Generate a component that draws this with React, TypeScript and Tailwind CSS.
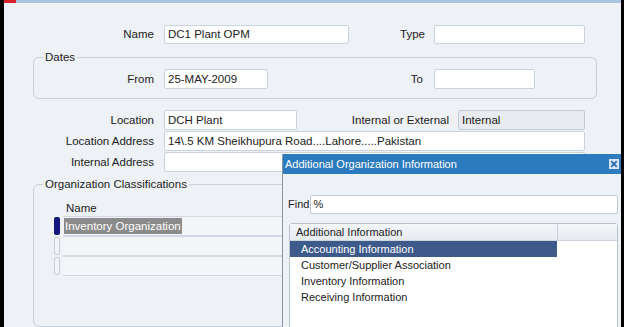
import React from 'react';

const font = "font-['Liberation_Sans',Arial,sans-serif]";

function Field({ w, value, gray }: { w: string; value?: string; gray?: boolean }) {
  return (
    <div
      className={`${w} h-full border rounded-[2px] flex items-center px-[3px] text-[11.5px] text-[#222] whitespace-nowrap overflow-hidden ${
        gray ? 'bg-[#e8ebef] border-[#c3cbd4]' : 'bg-white border-[#c9d2dd]'
      }`}
    >
      {value}
    </div>
  );
}

function Label({ w, children }: { w: string; children: React.ReactNode }) {
  return <div className={`${w} shrink-0 text-right text-[11.5px] text-[#222] whitespace-nowrap`}>{children}</div>;
}

function CloseIcon() {
  return (
    <svg width="10" height="10" viewBox="0 0 10 10">
      <rect x="0" y="0" width="10" height="10" fill="#d6e5f3" />
      <path d="M2.2 2.2 L7.8 7.8 M7.8 2.2 L2.2 7.8" stroke="#2a6cae" strokeWidth="1.8" />
    </svg>
  );
}

export default function App() {
  const items = ['Customer/Supplier Association', 'Inventory Information', 'Receiving Information'];

  return (
    <div className={`w-[624px] h-[327px] bg-black flex overflow-hidden relative ${font}`}>
      <div className="w-[4px] shrink-0 bg-black" />

      {/* main form */}
      <div className="w-[617px] shrink-0 flex flex-col bg-[#eef1f6]">
        <div className="h-[3px] shrink-0 flex">
          <div className="w-[12px] bg-[#d9202a]" />
          <div className="flex-1 bg-[#a9c3e1]" />
        </div>

        {/* Name / Type */}
        <div className="mt-[22px] h-[21px] flex items-center">
          <Label w="w-[150px]">Name</Label>
          <div className="ml-[10px] h-full flex items-center">
            <Field w="w-[185px]" value="DC1 Plant OPM" />
          </div>
          <Label w="w-[76px]">Type</Label>
          <div className="ml-[9px] h-full">
            <Field w="w-[151px]" />
          </div>
        </div>

        {/* Dates */}
        <fieldset className="mt-[7px] ml-[29px] w-[564px] border border-[#c8d0da] rounded-[6px] px-0 pt-[6px] pb-[9px]">
          <legend className="ml-[9px] px-[2px] text-[11.5px] leading-[12px] text-[#222]">Dates</legend>
          <div className="h-[20px] flex items-center">
            <Label w="w-[120px]">From</Label>
            <div className="ml-[10px] h-full">
              <Field w="w-[104px]" value="25-MAY-2009" />
            </div>
            <Label w="w-[155px]">To</Label>
            <div className="ml-[11px] h-full">
              <Field w="w-[101px]" />
            </div>
          </div>
        </fieldset>

        {/* Location block */}
        <div className="mt-[11px] flex flex-col gap-px">
          <div className="h-[20px] flex items-center">
            <Label w="w-[150px]">Location</Label>
            <div className="ml-[10px] h-full">
              <Field w="w-[133px]" value="DCH Plant" />
            </div>
            <Label w="w-[152px]">Internal or External</Label>
            <div className="ml-[9px] h-full">
              <Field w="w-[127px]" value="Internal" gray />
            </div>
          </div>
          <div className="h-[20px] flex items-center">
            <Label w="w-[150px]">Location Address</Label>
            <div className="ml-[10px] h-full">
              <Field w="w-[421px]" value="14\.5 KM Sheikhupura Road....Lahore.....Pakistan" />
            </div>
          </div>
          <div className="h-[20px] flex items-center">
            <Label w="w-[150px]">Internal Address</Label>
            <div className="ml-[10px] h-full">
              <Field w="w-[421px]" />
            </div>
          </div>
        </div>

        {/* Organization Classifications */}
        <fieldset className="mt-[6px] ml-[29px] w-[564px] h-[200px] border border-[#c8d0da] rounded-[6px] px-0 pt-[10px]">
          <legend className="ml-[9px] px-[2px] text-[11.5px] leading-[12px] text-[#222]">Organization Classifications</legend>
          <div className="ml-[20px] flex flex-col">
            <div className="h-[16px] pl-[12px] flex items-center text-[11.5px] text-[#222]">Name</div>
            {[0, 1, 2].map((i) => (
              <div key={i} className="h-[20px] flex items-stretch">
                <div className="w-[9px] shrink-0 py-[1px] pr-[2px]">
                  {i === 0 ? (
                    <div className="w-[6px] h-full rounded-[2px] bg-[#14177e]" />
                  ) : (
                    <div className="w-[6px] h-full rounded-[2px] border border-[#c4cdd9] bg-[#f2f4f8]" />
                  )}
                </div>
                <div className="w-[480px] border-y border-[#d2d9e2] bg-[#f3f5f9] flex items-center pl-px">
                  {i === 0 && (
                    <span className="bg-[#8b8b8b] text-white text-[11.5px] leading-[16px] px-px">Inventory Organization</span>
                  )}
                </div>
              </div>
            ))}
          </div>
        </fieldset>
      </div>

      <div className="w-[3px] shrink-0 bg-black" />

      {/* dialog */}
      <div className="absolute left-[282px] top-[154px] w-[339px] h-[190px] bg-[#eef1f6] border-l border-[#8797a8] flex flex-col">
        <div className="h-[20px] shrink-0 bg-[#2d7bbf] flex items-center justify-between pl-[2px] pr-[2px]">
          <span className="text-white text-[11px]">Additional Organization Information</span>
          <CloseIcon />
        </div>
        <div className="mt-[21px] h-[19px] flex items-center pl-[5px] pr-[3px]">
          <span className="text-[11px] text-[#222] mr-[1px]">Find</span>
          <div className="flex-1 h-full bg-white border border-[#c3ccd7] rounded-[2px] flex items-center px-[2px] text-[11px] text-[#222]">
            %
          </div>
        </div>
        <div className="mt-[9px] ml-[6px] mr-[3px] flex-1 bg-white border border-[#b9c3ce] rounded-t-[3px] flex flex-col">
          <div className="h-[17px] shrink-0 flex bg-gradient-to-b from-[#f5f7fa] to-[#e6ebf1] border-b border-[#cdd5de]">
            <div className="w-[268px] border-r border-[#c7cfd9] pl-[6px] flex items-center text-[11px] text-[#222]">
              Additional Information
            </div>
            <div className="flex-1" />
          </div>
          <div className="h-[16px] w-[267px] bg-[#3d5a8b] pl-[11px] flex items-center text-[11px] text-white">
            Accounting Information
          </div>
          {items.map((t) => (
            <div key={t} className="h-[16px] pl-[11px] flex items-center text-[11px] text-[#222]">
              {t}
            </div>
          ))}
        </div>
      </div>
    </div>
  );
}
